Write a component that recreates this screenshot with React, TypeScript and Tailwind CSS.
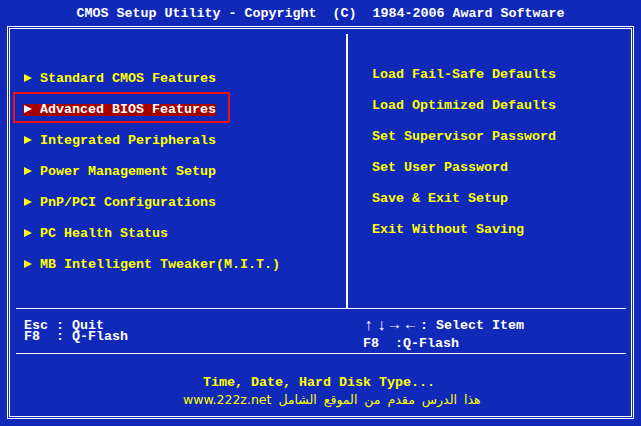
const leftItems = [
  "Standard CMOS Features",
  "Advanced BIOS Features",
  "Integrated Peripherals",
  "Power Management Setup",
  "PnP/PCI Configurations",
  "PC Health Status",
  "MB Intelligent Tweaker(M.I.T.)",
];

const rightItems = [
  "Load Fail-Safe Defaults",
  "Load Optimized Defaults",
  "Set Supervisor Password",
  "Set User Password",
  "Save & Exit Setup",
  "Exit Without Saving",
];

const Arrow = ({ color }: { color: string }) => (
  <svg width="8" height="8" viewBox="0 0 8 8" className="mb-[2px] shrink-0">
    <polygon points="0,0 8,4 0,8" fill={color} />
  </svg>
);

const App = () => {
  return (
    <div className="w-[641px] h-[426px] overflow-hidden bg-[#1129b8] font-['Liberation_Mono',monospace] text-[13.33px] font-bold">
      <div className="h-[26px] leading-[27px] text-center text-white whitespace-pre">
        CMOS Setup Utility - Copyright  (C)  1984-2006 Award Software
      </div>

      <div className="mx-[7px] h-[393px] border border-white p-px">
        <div className="h-full border border-white flex flex-col">
          {/* menus */}
          <div className="pl-[6px] pr-[5px] pt-[5px]">
            <div className="flex h-[274px]">
              <div className="w-[330px] pt-[29px]">
                {leftItems.map((item, i) =>
                  i === 1 ? (
                    <div key={item} className="relative h-[31px] flex items-center pl-[7px]">
                      <div className="flex items-center h-[12px] bg-[#a80000] pl-px">
                        <Arrow color="#ffffff" />
                        <span className="ml-[8px] leading-[15px] text-white">{item}</span>
                      </div>
                      <div className="absolute left-[-3px] top-[-2px] w-[217px] h-[31px] border-2 border-[#f01010]" />
                    </div>
                  ) : (
                    <div key={item} className="h-[31px] flex items-center pl-[8px]">
                      <Arrow color="#ffff00" />
                      <span className="ml-[8px] leading-[15px] text-[#ffff00]">{item}</span>
                    </div>
                  )
                )}
              </div>
              <div className="w-[2px] bg-white" />
              <div className="pl-[24px] pt-[25px]">
                {rightItems.map((item) => (
                  <div key={item} className="h-[31px] flex items-center">
                    <span className="leading-[15px] text-[#ffff00]">{item}</span>
                  </div>
                ))}
              </div>
            </div>
            <div className="h-px bg-white" />

            {/* key help */}
            <div className="flex h-[44px] text-white">
              <div className="w-[347px] pl-[8px] pt-[11px] leading-[11px] whitespace-pre">
                <div>Esc : Quit</div>
                <div>F8  : Q-Flash</div>
              </div>
              <div className="pt-[8px] leading-[18px] whitespace-pre">
                <div className="flex items-center h-[18px]">
                  <span className="w-[13px] pl-[1px] text-[16px]">↑</span>
                  <span className="w-[14px] pl-[1px] text-[16px]">↓</span>
                  <span className="w-[16px] text-[15px]">→</span>
                  <span className="w-[14px] text-[15px]">←</span>
                  <span>: Select Item</span>
                </div>
                <div>F8  :Q-Flash</div>
              </div>
            </div>
            <div className="h-px bg-white" />
          </div>

          {/* status */}
          <div className="pt-[21px] text-[#ffff00]">
            <div className="ml-[193px] leading-[16px]">Time, Date, Hard Disk Type...</div>
            <div
              dir="rtl"
              className="ml-[173px] w-fit leading-[18px] font-normal text-[12.5px] [word-spacing:3px] font-['DejaVu_Sans',sans-serif]"
            >
              هذا الدرس مقدم من الموقع الشامل www.222z.net
            </div>
          </div>
        </div>
      </div>
    </div>
  );
};

export default App;
